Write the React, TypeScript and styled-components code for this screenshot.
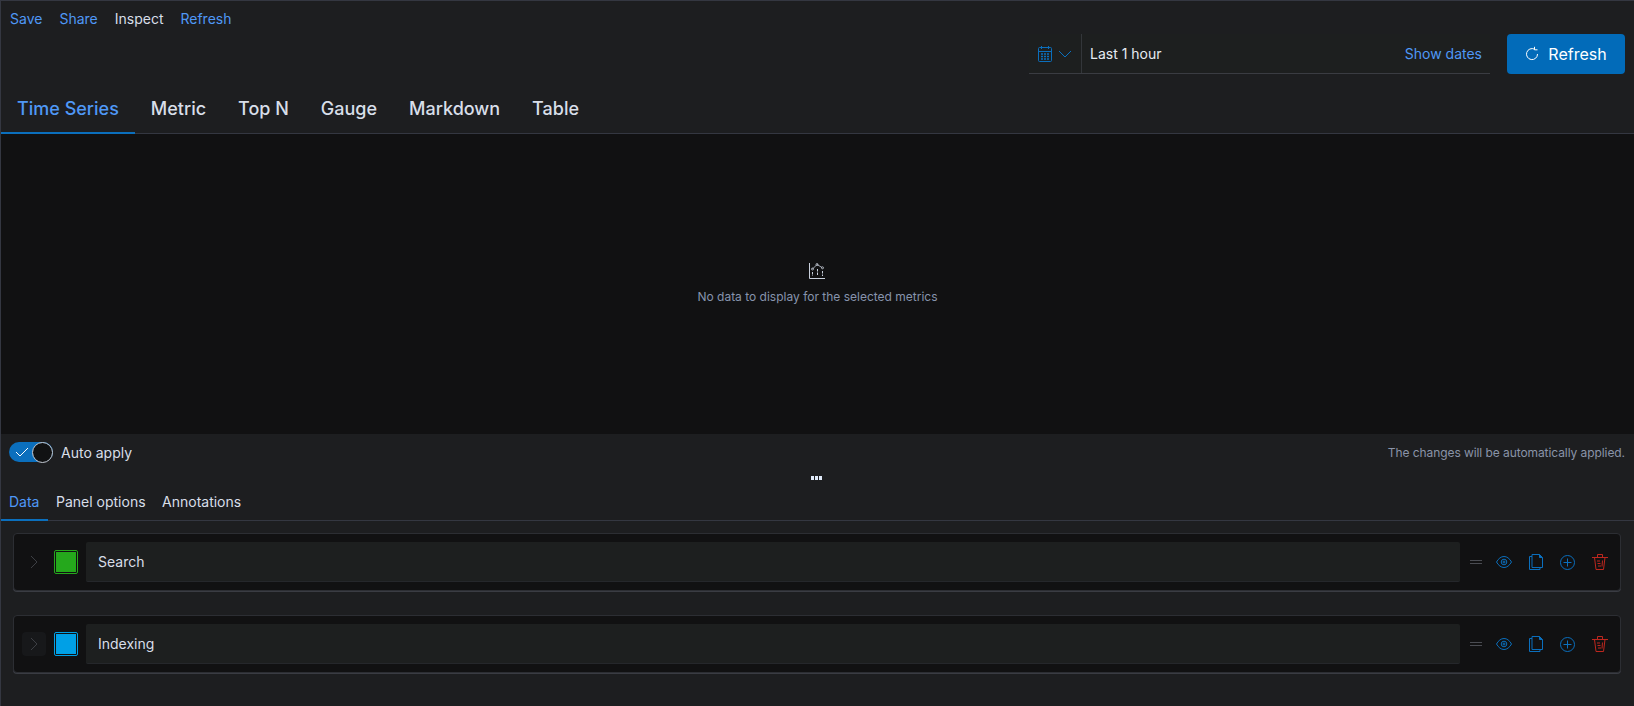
import styled, { createGlobalStyle } from "styled-components";

const GlobalStyle = createGlobalStyle`
  html, body {
    margin: 0;
    padding: 0;
    background: #1d1e20;
  }
  * {
    box-sizing: border-box;
  }
`;

const Page = styled.div`
  height: 706px;
  overflow: hidden;
  background: #1d1e20;
  border-top: 1px solid #343741;
  border-left: 1px solid #343741;
  font-family: Inter, "Liberation Sans", sans-serif;
  font-size: 14px;
  color: #d8dee9;
`;

const TopNav = styled.nav`
  display: flex;
  gap: 17px;
  height: 33px;
  padding: 9px 0 0 9px;
  line-height: 17px;
`;

const NavLink = styled.span<{ $plain?: boolean }>`
  color: ${(p) => (p.$plain ? "#d8dee9" : "#4f98f6")};
`;

const TimeBar = styled.div`
  display: flex;
  justify-content: flex-end;
  gap: 17px;
  height: 40px;
  padding-right: 9px;
`;

const DatePicker = styled.div`
  display: flex;
  align-items: center;
  width: 461px;
  height: 40px;
  background: #1d1f1f;
  border-bottom: 1px solid #3a3c42;
  padding-right: 8px;
`;

const DateIcons = styled.div`
  display: flex;
  align-items: center;
  justify-content: center;
  gap: 5px;
  width: 53px;
  height: 39px;
  padding-right: 2px;
  border-right: 1px solid #33363a;
`;

const DateText = styled.span`
  flex: 1;
  padding-left: 8px;
  color: #e6ebf2;
`;

const RefreshButton = styled.button`
  display: flex;
  align-items: center;
  justify-content: center;
  gap: 9px;
  width: 118px;
  height: 40px;
  border: 0;
  border-radius: 4px;
  background: #026bb9;
  color: #fff;
  font: 400 16px Inter, "Liberation Sans", sans-serif;
`;

const MainTabs = styled.div`
  display: flex;
  height: 60px;
  align-items: flex-end;
  border-bottom: 1px solid #343741;
`;

const MainTab = styled.div<{ $active?: boolean }>`
  padding: 0 16px;
  height: 48px;
  line-height: 46px;
  margin-bottom: -1px;
  font-size: 18px;
  font-weight: 500;
  color: ${(p) => (p.$active ? "#4f98f6" : "#d8dee9")};
  border-bottom: 2px solid ${(p) => (p.$active ? "#0b6fbd" : "transparent")};
`;

const Preview = styled.div`
  display: flex;
  flex-direction: column;
  align-items: center;
  justify-content: center;
  gap: 10px;
  height: 300px;
  background: #111112;
  color: #8794ad;
  font-size: 12px;
  line-height: 16px;
`;

const ChartGlyph = styled.svg`
  margin-right: 2px;
`;

const ApplyBar = styled.div`
  display: flex;
  align-items: center;
  justify-content: space-between;
  height: 36px;
  padding: 0 9px 0 8px;
`;

const ApplyLeft = styled.div`
  display: flex;
  align-items: center;
  gap: 8px;
`;

const Switch = styled.div`
  position: relative;
  width: 44px;
  height: 20px;
  border-radius: 10px;
  background: #0b6fbd;
`;

const SwitchKnob = styled.span`
  position: absolute;
  top: -0.5px;
  right: 0;
  width: 21px;
  height: 21px;
  border-radius: 50%;
  background: #111213;
  border: 1.5px solid #c5cbd4;
`;

const SwitchCheck = styled.svg`
  position: absolute;
  left: 6px;
  top: 4px;
`;

const Hint = styled.span`
  font-size: 12px;
  letter-spacing: -0.075px;
  color: #8a94a8;
`;

const ResizeHandle = styled.div`
  display: flex;
  justify-content: center;
  gap: 1px;
  height: 14px;
  padding-top: 6px;
  padding-right: 2px;
`;

const Dot = styled.span`
  width: 3px;
  height: 4px;
  background: #dfe9f8;
`;

const SubTabs = styled.div`
  display: flex;
  height: 37px;
  border-bottom: 1px solid #343741;
`;

const SubTab = styled.div<{ $active?: boolean }>`
  padding: 0 8.5px 0 8px;
  height: 37px;
  line-height: 35px;
  color: ${(p) => (p.$active ? "#4f98f6" : "#d8dee9")};
  border-bottom: 2px solid ${(p) => (p.$active ? "#0b6fbd" : "transparent")};
`;

const SeriesList = styled.div`
  display: flex;
  flex-direction: column;
  gap: 24px;
  padding: 12px 13px 0 12px;
`;

const SeriesCard = styled.div`
  display: flex;
  align-items: center;
  height: 58px;
  border-radius: 4px;
  background: #111112;
  border: 1px solid #2c2e33;
  box-shadow: 0 1px 0 #3a3c43;
`;

const Toggle = styled.div<{ $boxed?: boolean }>`
  display: flex;
  align-items: center;
  justify-content: center;
  width: 24px;
  height: 24px;
  margin: 0 8px;
  border-radius: 4px;
  background: ${(p) => (p.$boxed ? "#17181a" : "transparent")};
`;

const Swatch = styled.div<{ $fill: string; $edge: string }>`
  width: 24px;
  height: 24px;
  margin-right: 8px;
  border: 1px solid ${(p) => p.$edge};
  border-radius: 2px;
  padding: 1px;
  background: #111112;

  &::before {
    content: "";
    display: block;
    width: 100%;
    height: 100%;
    background: ${(p) => p.$fill};
  }
`;

const SeriesLabel = styled.div`
  flex: 1;
  height: 40px;
  line-height: 39px;
  padding-left: 12px;
  background: #1d1f1f;
  border-bottom: 1px solid #25272b;
  border-radius: 2px;
`;

const RowActions = styled.div`
  display: flex;
  align-items: center;
  width: 160px;
  padding-left: 10px;
  gap: 17px;
`;

const Grip = styled.svg`
  margin-right: -3px;
`;

const Series = [
  { name: "Search", fill: "#25a81c", edge: "#25a81c", boxed: false },
  { name: "Indexing", fill: "#00a0e6", edge: "#00a0e6", boxed: true },
];

const CalendarIcon = () => (
  <svg width="16" height="18" viewBox="0 0 16 18" fill="none" stroke="#0b6fbd">
    <rect x="1.5" y="2.5" width="13" height="14" rx="1" />
    <path d="M1.5 6.5h13M4.5 1v3M11.5 1v3" />
    <path d="M4 9h2M7 9h2M10 9h2M4 11.5h2M7 11.5h2M10 11.5h2M4 14h2M7 14h2M10 14h2" strokeWidth="1.4" />
  </svg>
);

const ChevronDown = () => (
  <svg width="14" height="10" viewBox="0 0 14 10" fill="none" stroke="#0b6fbd">
    <path d="M1 2l6 6 6-6" />
  </svg>
);

const RefreshIcon = () => (
  <svg width="14" height="16" viewBox="0 0 14 16" fill="none" stroke="#fff">
    <path d="M9.500 3.200A5.500 5.500 0 1 0 12.500 8" />
    <path d="M9.500.800v3h3" />
  </svg>
);

const ChartIcon = () => (
  <ChartGlyph width="16" height="16" viewBox="0 0 16 16" fill="none" stroke="#c9d0dc">
    <path d="M.5 0v15.500H16" />
    <path d="M3.500 6l4.500-4.500 5 3" strokeWidth="0.8" />
    <circle cx="3.500" cy="6" r="1" strokeWidth="0.8" />
    <circle cx="8" cy="1.500" r="1" strokeWidth="0.8" />
    <circle cx="13.500" cy="4.800" r="1" strokeWidth="0.8" />
    <path d="M3.500 9v4M8.500 6v7M13.500 8v5" strokeDasharray="2.500 1" />
  </ChartGlyph>
);

const ChevronRight = () => (
  <svg width="8" height="14" viewBox="0 0 8 14" fill="none" stroke="#3d3f44">
    <path d="M1 1l6 6-6 6" />
  </svg>
);

const GripIcon = () => (
  <Grip width="12" height="4" viewBox="0 0 12 4" stroke="#4a4c52">
    <path d="M0 .500h12M0 3.500h12" />
  </Grip>
);

const EyeIcon = () => (
  <svg width="16" height="12" viewBox="0 0 16 12" fill="none" stroke="#0b6fbd">
    <path d="M.500 6C2.500 2.500 5 .500 8 .500s5.500 2 7.500 5.500c-2 3.500-4.500 5.500-7.500 5.500S2.500 9.500.500 6z" />
    <circle cx="8" cy="6" r="2.800" />
    <circle cx="8" cy="6" r="1" />
  </svg>
);

const CopyIcon = () => (
  <svg width="14" height="16" viewBox="0 0 14 16" fill="none" stroke="#0b6fbd">
    <path d="M3 .500h7.500l3 3V13.500H3z" />
    <path d="M3 2.500H.500v13h10.500v-2" />
    <path d="M10.500 .500v3h3" fill="#0b6fbd" />
  </svg>
);

const PlusIcon = () => (
  <svg width="15" height="15" viewBox="0 0 15 15" fill="none" stroke="#0b6fbd">
    <circle cx="7.500" cy="7.500" r="7" />
    <path d="M7.500 3.500v8M3.500 7.500h8" />
  </svg>
);

const TrashIcon = () => (
  <svg width="16" height="16" viewBox="0 0 16 16" fill="none" stroke="#bd271e">
    <path d="M0 3.500h16M5.500 3.500V.500h5v3" />
    <path d="M2.500 3.500l1.500 12h7.500l1.500-12" />
    <path d="M5 7h3M5.500 9.500h3M6 12h3M10.500 6.500l-.5 6" />
  </svg>
);

export default function App() {
  return (
    <Page>
      <GlobalStyle />
      <TopNav>
        <NavLink>Save</NavLink>
        <NavLink>Share</NavLink>
        <NavLink $plain>Inspect</NavLink>
        <NavLink>Refresh</NavLink>
      </TopNav>
      <TimeBar>
        <DatePicker>
          <DateIcons>
            <CalendarIcon />
            <ChevronDown />
          </DateIcons>
          <DateText>Last 1 hour</DateText>
          <NavLink>Show dates</NavLink>
        </DatePicker>
        <RefreshButton>
          <RefreshIcon />
          Refresh
        </RefreshButton>
      </TimeBar>
      <MainTabs>
        <MainTab $active>Time Series</MainTab>
        <MainTab>Metric</MainTab>
        <MainTab>Top N</MainTab>
        <MainTab>Gauge</MainTab>
        <MainTab>Markdown</MainTab>
        <MainTab>Table</MainTab>
      </MainTabs>
      <Preview>
        <ChartIcon />
        No data to display for the selected metrics
      </Preview>
      <ApplyBar>
        <ApplyLeft>
          <Switch>
            <SwitchCheck width="14" height="12" viewBox="0 0 14 12" fill="none" stroke="#fff">
              <path d="M1 6l4 4 8-8" />
            </SwitchCheck>
            <SwitchKnob />
          </Switch>
          Auto apply
        </ApplyLeft>
        <Hint>The changes will be automatically applied.</Hint>
      </ApplyBar>
      <ResizeHandle>
        <Dot />
        <Dot />
        <Dot />
      </ResizeHandle>
      <SubTabs>
        <SubTab $active>Data</SubTab>
        <SubTab>Panel options</SubTab>
        <SubTab>Annotations</SubTab>
      </SubTabs>
      <SeriesList>
        {Series.map((s) => (
          <SeriesCard key={s.name}>
            <Toggle $boxed={s.boxed}>
              <ChevronRight />
            </Toggle>
            <Swatch $fill={s.fill} $edge={s.edge} />
            <SeriesLabel>{s.name}</SeriesLabel>
            <RowActions>
              <GripIcon />
              <EyeIcon />
              <CopyIcon />
              <PlusIcon />
              <TrashIcon />
            </RowActions>
          </SeriesCard>
        ))}
      </SeriesList>
    </Page>
  );
}
